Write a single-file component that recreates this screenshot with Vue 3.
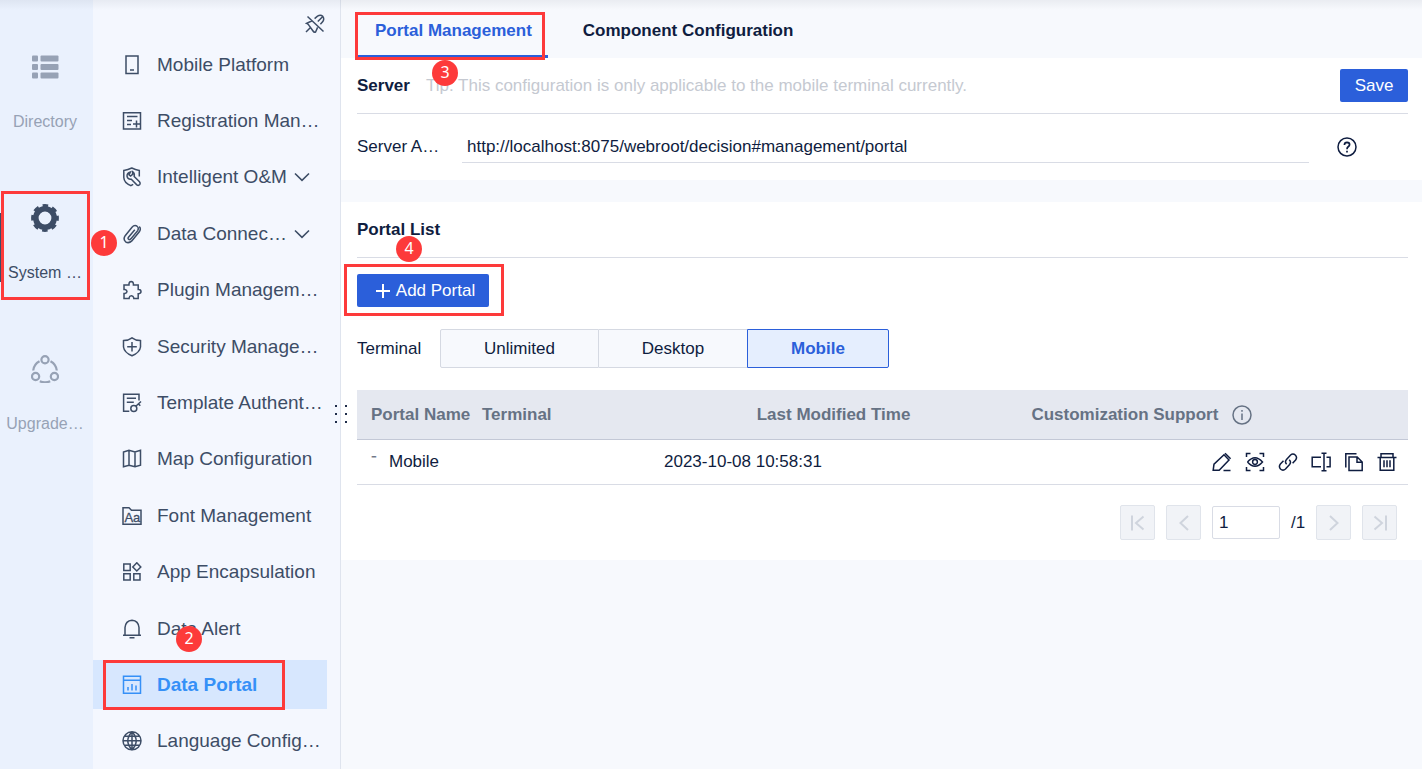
<template>
  <div class="page">
    <nav class="rail">
      <a
        v-for="entry in railEntries"
        :key="entry.label"
        href="#"
        class="rail-item"
        :class="{ active: entry.active }"
      >
        <svg v-if="entry.icon === 'list'" class="rail-icon" viewBox="0 0 28 28" fill="currentColor">
          <rect x="1" y="2.5" width="6" height="6" rx="1" />
          <rect x="1" y="11" width="6" height="6" rx="1" />
          <rect x="1" y="19.5" width="6" height="6" rx="1" />
          <rect x="9.5" y="2.5" width="18" height="6" rx="1" />
          <rect x="9.5" y="11" width="18" height="6" rx="1" />
          <rect x="9.5" y="19.5" width="18" height="6" rx="1" />
        </svg>
        <svg v-else-if="entry.icon === 'gear'" class="rail-icon" viewBox="0 0 28 28" fill="none" stroke="currentColor">
          <circle cx="14" cy="14" r="9.2" stroke-width="5.6" />
          <circle cx="14" cy="14" r="12.2" stroke-width="3.4" stroke-dasharray="5.4 4.182" stroke-dashoffset="2.7" />
        </svg>
        <svg v-else class="rail-icon" viewBox="0 0 28 28" fill="none" stroke="currentColor" stroke-width="2.2">
          <circle cx="14" cy="4.7" r="3.6" />
          <circle cx="4.6" cy="21.5" r="3.6" />
          <circle cx="23.4" cy="21.5" r="3.6" />
          <path d="M8.5 6.2A12 12 0 0 0 2.2 15.5M19.5 6.2A12 12 0 0 1 25.8 15.5M8.8 26.2A13 13 0 0 0 19.2 26.2" />
        </svg>
        <span class="rail-label">{{ entry.label }}</span>
        <template v-if="entry.active">
          <span class="mark mark-rail"></span>
          <span class="badge badge-rail">1</span>
        </template>
      </a>
    </nav>

    <aside class="menu">
      <button class="pin" aria-label="Unpin menu">
        <svg class="icon" viewBox="0 0 20 20">
          <path d="M2.5 2.5L18.5 17.5M7.2 6.8L1.6 9.4Q3.4 10.2 4 11.4L8 17Q9 18.6 10.6 18L12.6 13.4M5 14L1 18M9.6 4.6L12.5 2.2Q15.5 0.2 17.8 2.4Q19.6 4.8 17.8 7.6L15.4 10.2M12.8 7.6L17.8 2.4" />
        </svg>
      </button>
      <ul class="menu-list">
        <li v-for="item in menuItems" :key="item.label">
          <a href="#" class="menu-item" :class="{ active: item.active }">
            <svg class="icon" viewBox="0 0 20 20">
              <path :d="item.path" />
              <text v-if="item.glyph" x="2.4" y="16.2" class="icon-text">{{ item.glyph }}</text>
            </svg>
            <span>{{ item.label }}</span>
            <svg v-if="item.expandable" class="chevron" viewBox="0 0 16 10">
              <path d="M1 1.5L8 8.3L15 1.5" />
            </svg>
            <template v-if="item.active">
              <span class="mark mark-menu"></span>
              <span class="badge badge-menu">2</span>
            </template>
          </a>
        </li>
      </ul>
      <svg class="grip" viewBox="0 0 12 20" fill="#1f2d4a">
        <path d="M0 1h2v2H0zM0 9h2v2H0zM0 17h2v2H0zM10 1h2v2h-2zM10 9h2v2h-2zM10 17h2v2h-2z" />
      </svg>
    </aside>

    <main class="content">
      <div class="tabs">
        <button class="tab active">
          Portal Management
          <span class="mark mark-tab"></span>
          <span class="badge badge-tab">3</span>
        </button>
        <button class="tab">Component Configuration</button>
      </div>

      <section class="panel">
        <header class="panel-header">
          <h2>Server</h2>
          <span class="tip">Tip: This configuration is only applicable to the mobile terminal currently.</span>
          <button class="primary save">Save</button>
        </header>
        <div class="address-row">
          <label for="address">Server A…</label>
          <input id="address" v-model="address" type="text" />
          <svg class="icon" viewBox="0 0 20 20">
            <circle cx="10" cy="10" r="9" />
            <path d="M7.4 8Q7.5 5.4 10 5.4Q12.6 5.5 12.6 7.7Q12.5 8.8 11.2 9.7Q10 10.6 10 12.2M10 13.7v1.8" stroke-width="1.7" />
          </svg>
        </div>
      </section>

      <section class="panel">
        <header class="panel-header">
          <h2>Portal List</h2>
        </header>
        <div class="add-row">
          <button class="primary add">
            <svg class="plus" viewBox="0 0 16 16"><path d="M8 1v14M1 8h14" /></svg>
            Add Portal
            <span class="mark mark-add"></span>
            <span class="badge badge-add">4</span>
          </button>
        </div>
        <div class="terminal-row">
          <span class="terminal-label">Terminal</span>
          <div class="segments">
            <button class="segment unlimited">Unlimited</button>
            <button class="segment desktop">Desktop</button>
            <button class="segment mobile active">Mobile</button>
          </div>
        </div>

        <table>
          <thead>
            <tr>
              <th class="col-name">Portal Name</th>
              <th class="col-terminal">Terminal</th>
              <th class="col-time">Last Modified Time</th>
              <th class="col-custom">
                Customization Support
                <svg class="icon" viewBox="0 0 20 20">
                  <circle cx="10" cy="10" r="9" />
                  <path d="M10 8.5v6.5M10 5v1.8" />
                </svg>
              </th>
            </tr>
          </thead>
          <tbody>
            <tr v-for="portal in portals" :key="portal.time">
              <td class="col-name">{{ portal.name }}</td>
              <td class="col-terminal">{{ portal.terminal }}</td>
              <td class="col-time">{{ portal.time }}</td>
              <td class="col-actions">
                <button v-for="action in actions" :key="action.label" :aria-label="action.label">
                  <svg class="icon" viewBox="0 0 20 20"><path :d="action.path" /></svg>
                </button>
              </td>
            </tr>
          </tbody>
        </table>

        <div class="pager">
          <button disabled aria-label="First page">
            <svg viewBox="0 0 16 16"><path d="M2 0.5v15M13.5 1.5L6 8L13.5 14.5" /></svg>
          </button>
          <button disabled aria-label="Previous page">
            <svg viewBox="0 0 16 16"><path d="M12 1L4.5 8L12 15" /></svg>
          </button>
          <input v-model="page" type="text" aria-label="Page number" />
          <span class="total">/1</span>
          <button disabled aria-label="Next page">
            <svg viewBox="0 0 16 16"><path d="M4 1L11.5 8L4 15" /></svg>
          </button>
          <button disabled aria-label="Last page">
            <svg viewBox="0 0 16 16"><path d="M2.5 1.5L10 8L2.5 14.5M14 0.5v15" /></svg>
          </button>
        </div>
      </section>
    </main>
  </div>
</template>

<script setup>
import { ref } from 'vue'

const address = ref('http://localhost:8075/webroot/decision#management/portal')
const page = ref('1')

const railEntries = [
  { label: 'Directory', icon: 'list' },
  { label: 'System …', icon: 'gear', active: true },
  { label: 'Upgrade…', icon: 'upgrade' }
]

const menuItems = [
  { label: 'Mobile Platform', path: 'M4 1h12v17.4H4zM8 15h4' },
  { label: 'Registration Man…', path: 'M1.5 1.7h17v16.3h-17zM5 5.6h10.5M5 9.6h5M5 13.6h4M14.5 9.5v7M11 13h7' },
  {
    label: 'Intelligent O&M',
    expandable: true,
    path: 'M17.3 9.5V3.4Q13.5 2.8 9.8 1Q6 2.8 1.8 3.4V10.5Q2 15.8 8.8 18.6L11.2 17.4M8.4 5Q4.9 6 5 9.2Q5.8 12.8 9.3 12.3L14.8 17.9Q16.5 19 17.8 17.5Q18.7 16.2 17.5 14.8L12.2 9.6Q12.9 5.8 10.6 4.6V7.4L8.6 9L7 7.8z'
  },
  {
    label: 'Data Connec…',
    expandable: true,
    path: 'M12.8 5.8L6.5 13.2Q5.4 15 7 15.6Q8.2 15.8 9.2 14.6L15.7 6.6Q17.2 3.6 14.8 2Q12.2 0.8 10 3.2L3.2 11.7Q0.8 15.3 3.6 17.8Q6.8 19.8 9.8 16.9L17.3 7.8Q19.4 4.5 17.2 2.6'
  },
  {
    label: 'Plugin Managem…',
    path: 'M2 5h5V3.8Q7.2 1.5 9.2 1.4Q11.2 1.5 11.4 3.8V5h4.8v4.5h.6Q19 9.7 19 11.6Q19 13.5 16.8 13.7h-.6v4.8h-4.4v-.7Q11.3 15.7 9.4 15.7Q7.5 15.7 7.1 17.8v.7H2v-5h.9Q5 13.2 5 11.5Q5 9.8 2.9 9.5H2z'
  },
  { label: 'Security Manage…', path: 'M10 0.8Q13.5 3.4 18.5 3.6V10Q17.8 15.5 10 18.8Q2.2 15.5 1.5 10V3.6Q6.5 3.4 10 0.8zM10 5v9.6M5.2 9.8h9.6' },
  {
    label: 'Template Authent…',
    path: 'M17 7.5V1.2H1.6V18.2H7.3M4.8 5.2h9.2M4.8 9.2h7M11.8 18.5A3 3 0 1 1 11.8 12.5A3 3 0 1 1 11.8 18.5M13.8 13.3L19 8.5M16.4 10.9L18.3 12.7'
  },
  { label: 'Map Configuration', path: 'M1.5 3L7 1.3L13 3L18.5 1.3V16.3L13 17.8L7 16.3L1.5 17.8zM7 1.3v15M13 3v14.8' },
  { label: 'Font Management', glyph: 'Aa', path: 'M1 18.3V1.8H7L9.5 4.3H19V18.3z' },
  { label: 'App Encapsulation', path: 'M1.8 2h6.4v6.4h-6.4zM1.8 11.8h6.4v6.2h-6.4zM11.8 11.8h6.2v6.2h-6.2zM14.8 0.8L18.8 4.9L14.8 9L10.8 4.9z' },
  { label: 'Data Alert', path: 'M3 16V8.5Q3.5 1.8 10 1.2Q16.5 1.8 17 8.5V16M1 16.2h18M7.5 18.8h5' },
  { label: 'Data Portal', active: true, path: 'M1.5 1.2h17v17h-17zM1.5 5.2h17M6 12v3.5M10 9v6.5M14 10.5v5' },
  {
    label: 'Language Config…',
    path: 'M10 0.8A9 9 0 1 1 10 18.8A9 9 0 1 1 10 0.8M10 0.8Q1.6 9.8 10 18.8Q18.4 9.8 10 0.8M10 0.8v18M1 9.8h18M2.4 5.3h15.2M2.4 14.3h15.2'
  }
]

const portals = [{ name: '⁻', terminal: 'Mobile', time: '2023-10-08 10:58:31' }]

const actions = [
  { label: 'Edit', path: 'M1.2 18.2L2 12.2L12 2.8L17 8L7.2 18.2zM13 1.2L18.6 6.8M11.5 18.4h7' },
  {
    label: 'Preview',
    path: 'M1.5 5V1.6h4M14.5 1.6h4V5M18.5 15v3.4h-4M5.5 18.4h-4V15M2.5 10Q10 1.4 17.5 10Q10 18.6 2.5 10M10 7.6A2.4 2.4 0 1 1 10 12.4A2.4 2.4 0 1 1 10 7.6'
  },
  {
    label: 'Copy link',
    path: 'M8.6 12.2Q6.4 9.8 8.5 7.5L12.6 3Q15 1 17.5 3.2Q19.5 5.4 17.6 8L14.6 11.2M11.2 7.8Q13.6 10 11.6 12.5L7.5 17Q5 19.2 2.5 17Q0.4 14.6 2.4 12L5.5 8.8'
  },
  { label: 'Rename', path: 'M10 5.2H1.2v9.6H10M15.5 5.2h3.6v9.6h-3.6M13 1.2v17.6M10.5 1.2h5M10.5 18.8h5' },
  { label: 'Duplicate', path: 'M1.8 15.5V1.8H12.5M5 5h8.2L18.2 10V18.4H5zM13 5v5.2h5.2' },
  { label: 'Delete', path: 'M0.5 5.4h19M4 5.4V1.8h12v3.6M3.2 5.4V18.3h13.6V5.4M7 8.3v7M10 8.3v7M13 8.3v7' }
]
</script>

<style>
body {
  margin: 0;
}
</style>

<style scoped>
.page {
  position: relative;
  display: flex;
  min-height: 100vh;
  background-color: #f7f9fd;
  color: #0f1d40;
  font-family: "Liberation Sans", Arial, sans-serif;
  font-size: 17px;
  line-height: 20px;
}

.page::before {
  content: "";
  position: absolute;
  top: 0;
  left: 0;
  right: 0;
  height: 10px;
  background: linear-gradient(rgba(60, 70, 90, 0.07), rgba(60, 70, 90, 0));
  z-index: 5;
}

.page * {
  box-sizing: border-box;
}

button,
input {
  font: inherit;
  color: inherit;
  margin: 0;
  padding: 0;
  border: none;
  background: none;
}

a {
  color: inherit;
  text-decoration: none;
}

.icon {
  width: 20px;
  height: 20px;
  flex: none;
  display: block;
  fill: none;
  stroke: currentColor;
  stroke-width: 1.5;
}

.icon-text {
  font-size: 13px;
  fill: currentColor;
  stroke: currentColor;
  stroke-width: 0.3;
}

/* step annotations */
.mark {
  position: absolute;
  border: 3px solid #fd3a3a;
}

.badge {
  position: absolute;
  width: 26px;
  height: 26px;
  border-radius: 50%;
  background-color: #fd3a3a;
  color: #fff;
  font-family: "Noto Sans", sans-serif;
  font-size: 16px;
  font-weight: 400;
  line-height: 24px;
  text-align: center;
  z-index: 4;
}

.mark-rail {
  left: 1px;
  top: 19px;
  width: 89px;
  height: 109px;
}

.badge-rail {
  left: 91px;
  top: 58px;
}

.mark-menu {
  left: 10px;
  top: 0;
  width: 182px;
  height: 50px;
}

.badge-menu {
  left: 83px;
  top: -34px;
}

.mark-tab {
  left: -2px;
  top: 12px;
  width: 190px;
  height: 48px;
}

.badge-tab {
  left: 75px;
  top: 60px;
}

.mark-add {
  left: -13px;
  top: -10px;
  width: 160px;
  height: 52px;
}

.badge-add {
  left: 39px;
  top: -38px;
}

/* left rail */
.rail {
  position: relative;
  z-index: 2;
  flex: none;
  width: 93px;
  padding-top: 21px;
  background-color: #eaf1fd;
}

.rail-item {
  position: relative;
  display: flex;
  flex-direction: column;
  align-items: center;
  gap: 31px;
  height: 151px;
  padding: 32px 3px 0 0;
  color: #97a2b5;
}

.rail-item.active {
  color: #3d4d66;
}

.rail-item.active::before {
  content: "";
  position: absolute;
  left: 0;
  top: 41px;
  width: 2px;
  height: 69px;
  background-color: #3d4d66;
}

.rail-icon {
  width: 28px;
  height: 28px;
}

.rail-label {
  font-size: 16px;
  white-space: nowrap;
}

/* menu */
.menu {
  position: relative;
  flex: none;
  width: 248px;
  display: flex;
  flex-direction: column;
  min-height: 100vh;
  padding: 14px 13px 3px 0;
  border-right: 1px solid #dfe4ee;
  background-color: #f4f7fe;
  color: #3d4d66;
}

.pin {
  align-self: flex-end;
  margin: 0 2px 6px 0;
}

.menu-list {
  flex: 1;
  display: flex;
  flex-direction: column;
  justify-content: space-between;
  margin: 0;
  padding: 0;
  list-style: none;
}

.menu-item {
  position: relative;
  display: flex;
  align-items: center;
  height: 49px;
  padding-left: 29px;
  font-size: 19px;
  white-space: nowrap;
}

.menu-item .icon {
  margin-right: 15px;
}

.menu-item.active {
  background-color: #d7e7fe;
  color: #3590f7;
  font-weight: 700;
}

.chevron {
  width: 16px;
  height: 10px;
  margin-left: 7px;
  fill: none;
  stroke: currentColor;
  stroke-width: 1.6;
}

.grip {
  position: absolute;
  top: 404px;
  right: -7px;
  width: 12px;
  height: 20px;
  z-index: 3;
}

/* content */
.content {
  flex: 1;
  min-width: 0;
}

.tabs {
  display: flex;
  gap: 17px;
  height: 58px;
  padding-left: 16px;
}

.tab {
  position: relative;
  height: 58px;
  padding: 3px 16px 0 18px;
  font-size: 17px;
  font-weight: 700;
}

.tab.active {
  box-shadow: inset 0 -3px #2b5fda;
  color: #2b5fda;
}

.panel {
  padding: 0 14px 0 16px;
  margin-bottom: 22px;
  background-color: #fff;
}

.panel-header {
  display: flex;
  align-items: center;
  height: 56px;
  border-bottom: 1px solid #d9dce5;
}

h2 {
  margin: 0;
  font-size: 17px;
  font-weight: 700;
}

.tip {
  margin-left: 16px;
  color: #c5c9d1;
}

.primary {
  height: 33px;
  border-radius: 2px;
  background-color: #2b5fda;
  color: #fff;
}

.save {
  width: 68px;
  margin-left: auto;
}

.address-row {
  display: flex;
  align-items: center;
  height: 66px;
  padding-right: 51px;
}

.address-row label {
  width: 105px;
}

.address-row input {
  flex: 1;
  min-width: 0;
  height: 32px;
  margin-right: 28px;
  padding-left: 5px;
  border-bottom: 1px solid #d9dce5;
}

.add-row {
  display: flex;
  padding-top: 16px;
}

.add {
  position: relative;
  display: flex;
  align-items: center;
  justify-content: center;
  gap: 5px;
  width: 132px;
  padding-left: 4px;
}

.plus {
  width: 16px;
  height: 16px;
  fill: none;
  stroke: #fff;
  stroke-width: 2;
}

.terminal-row {
  display: flex;
  align-items: center;
  padding: 22px 0;
}

.terminal-label {
  width: 83px;
}

.segments {
  display: flex;
}

.segment {
  height: 39px;
  border: 1px solid #d5d9e2;
  background-color: #f7f9fd;
}

.unlimited {
  width: 159px;
  border-radius: 2px 0 0 2px;
}

.desktop {
  width: 148px;
  border-left: none;
  border-right: none;
}

.mobile {
  width: 142px;
  border-radius: 0 2px 2px 0;
}

.segment.active {
  border-color: #2b5fda;
  background-color: #e5eefe;
  color: #2b5fda;
  font-weight: 700;
}

table {
  display: block;
}

thead,
tbody {
  display: block;
}

tr {
  display: flex;
  align-items: center;
  padding-left: 14px;
}

thead tr {
  height: 50px;
  border-bottom: 1px solid #c3c8d6;
  background-color: #e5e8f0;
  color: #667284;
}

tbody tr {
  height: 45px;
  border-bottom: 1px solid #d9dce5;
}

th,
td {
  padding: 0;
  text-align: left;
  white-space: nowrap;
}

th.col-name {
  width: 111px;
}

td.col-name {
  width: 18px;
}

.col-terminal,
.col-time {
  flex: 275 1 0;
}

.col-custom {
  display: flex;
  align-items: center;
  gap: 14px;
  flex: 377 1 0;
}

.col-actions {
  display: flex;
  justify-content: flex-end;
  gap: 13px;
  flex: 458 1 0;
  padding-right: 11px;
}

.pager {
  display: flex;
  align-items: center;
  justify-content: flex-end;
  gap: 11px;
  padding: 20px 11px;
}

.pager button {
  display: flex;
  align-items: center;
  justify-content: center;
  width: 35px;
  height: 35px;
  border: 1px solid #e0e4eb;
  border-radius: 2px;
  background-color: #f1f3f7;
  color: #cfd4dd;
}

.pager svg {
  width: 16px;
  height: 16px;
  fill: none;
  stroke: currentColor;
  stroke-width: 2;
}

.pager input {
  width: 68px;
  height: 33px;
  padding-left: 6px;
  border: 1px solid #d9dce5;
  border-radius: 2px;
}

.total {
  width: 14px;
}
</style>
